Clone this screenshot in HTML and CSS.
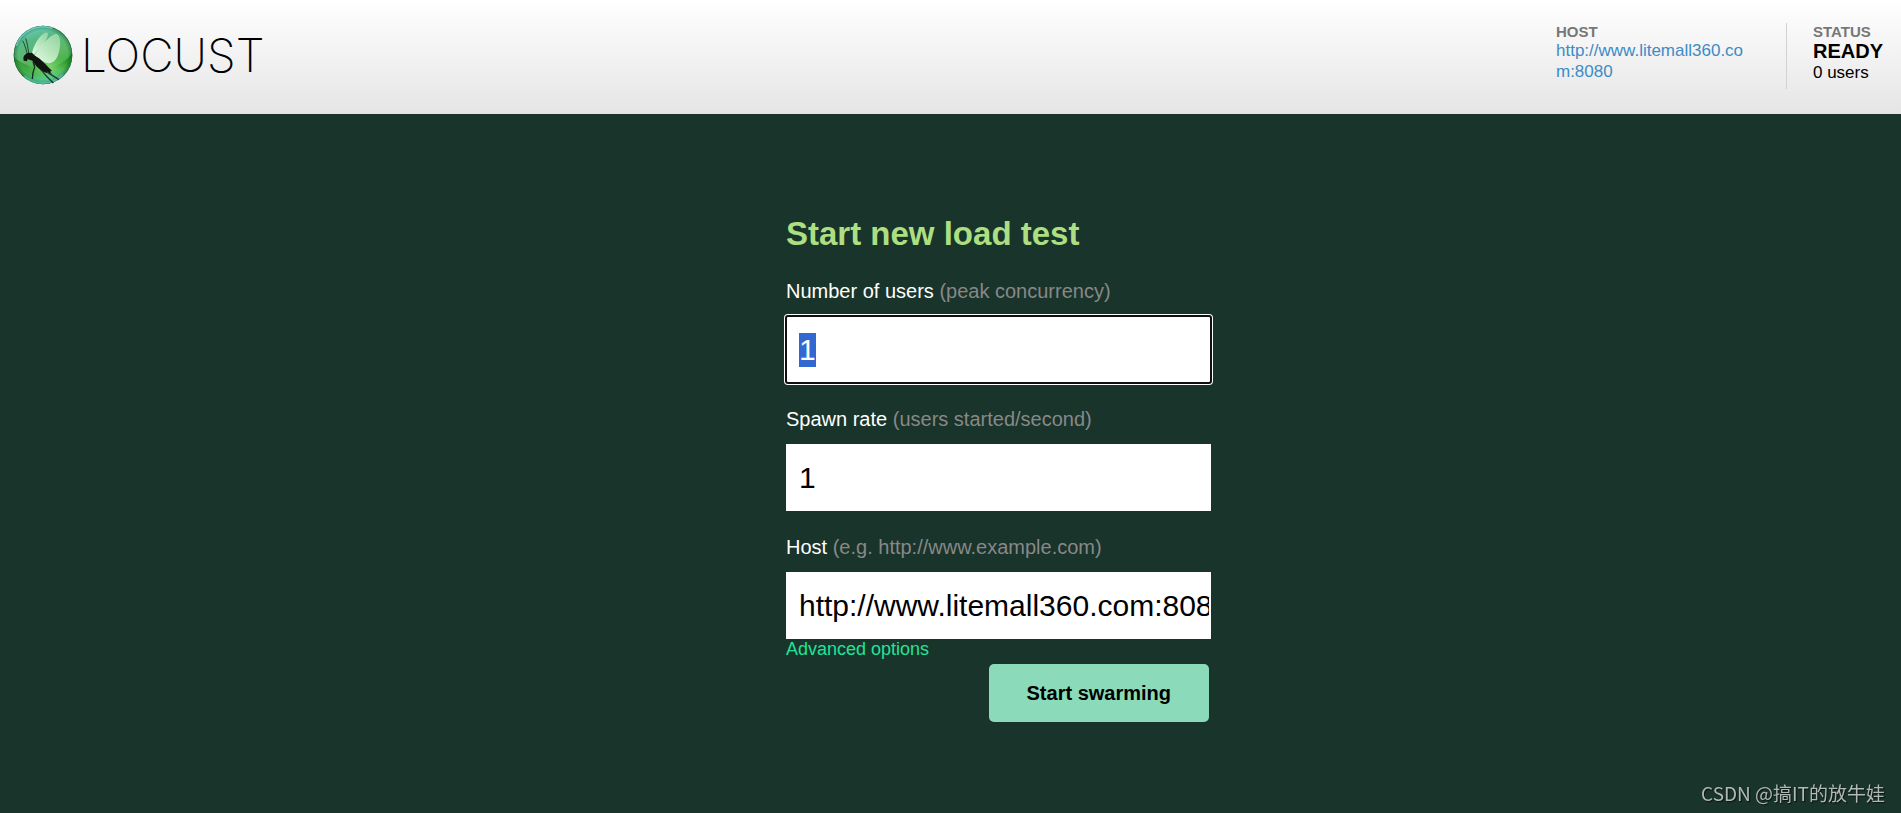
FILE: index.html
```html
<!DOCTYPE html>
<html lang="en">
<head>
<meta charset="utf-8">
<title>Locust</title>
<link rel="stylesheet" href="styles.css">
</head>
<body>
<header class="top">
  <div class="logo">
    <svg class="logo-mark" viewBox="0 0 180 180" aria-hidden="true">
      <defs>
        <linearGradient id="ball" x1="0.2" y1="0" x2="0.5" y2="1">
          <stop offset="0" stop-color="#6fcfc8"/>
          <stop offset="0.25" stop-color="#58b989"/>
          <stop offset="0.55" stop-color="#5cb866"/>
          <stop offset="0.8" stop-color="#3fae3c"/>
          <stop offset="1" stop-color="#52c0a4"/>
        </linearGradient>
        <radialGradient id="rim" cx="0.5" cy="0.5" r="0.5">
          <stop offset="0.84" stop-color="#0b4a1c" stop-opacity="0"/>
          <stop offset="0.96" stop-color="#0b5a26" stop-opacity="0.35"/>
          <stop offset="1" stop-color="#063c22" stop-opacity="0.85"/>
        </radialGradient>
        <linearGradient id="shade" x1="0" y1="0" x2="0" y2="1">
          <stop offset="0" stop-color="#08700f" stop-opacity="0.85"/>
          <stop offset="0.55" stop-color="#2d9a2d" stop-opacity="0.4"/>
          <stop offset="1" stop-color="#5fd9c2" stop-opacity="0.5"/>
        </linearGradient>
        <radialGradient id="glow" cx="0.5" cy="0.5" r="0.5">
          <stop offset="0" stop-color="#a5f08e" stop-opacity="0.7"/>
          <stop offset="1" stop-color="#7ed968" stop-opacity="0"/>
        </radialGradient>
        <linearGradient id="wing" x1="1" y1="0" x2="0.2" y2="1">
          <stop offset="0" stop-color="#a4dca8" stop-opacity="0.75"/>
          <stop offset="1" stop-color="#e2fbe4" stop-opacity="0.95"/>
        </linearGradient>
      </defs>
      <circle cx="90" cy="90" r="88" fill="url(#ball)"/>
      <path d="M2 96C30 120 60 130 92 128C130 126 160 112 177 84A88 88 0 0 1 2 96Z" fill="url(#shade)"/>
      <ellipse cx="105" cy="130" rx="66" ry="42" fill="url(#glow)"/>
      <circle cx="90" cy="90" r="88" fill="url(#rim)"/>
      <path d="M10 62A84 84 0 0 1 118 10" fill="none" stroke="#86e0e2" stroke-width="5" opacity="0.6"/>
      <path d="M34 153A84 84 0 0 0 150 149" fill="none" stroke="#6bd5c8" stroke-width="6" opacity="0.5"/>
      <path d="M57 84C62 62 80 28 100 22C110 23 103 42 91 58C81 71 70 81 62 90Z" fill="url(#wing)"/>
      <path d="M64 91C80 67 107 32 129 26C146 30 144 68 134 93C125 113 110 119 95 112C82 106 72 100 64 91Z" fill="url(#wing)"/>
      <path d="M29 47C35 58 38 69 42 84M38 40C43 55 45 68 47 84" fill="none" stroke="#14351e" stroke-width="2.5"/>
      <path d="M33 92L42 84L57 83L64 91L80 101L96 116L112 133L117 137L111 140L117 147L108 144L101 144L87 139L70 124L58 107L50 104L43 103L42 109L32 107L31 98Z" fill="#11150f"/>
      <path d="M60 110L65 127L60 143L58 162M65 127L63 117M84 134C96 150 108 162 121 174M100 140C113 148 126 157 138 164" fill="none" stroke="#122c25" stroke-width="4" stroke-linejoin="round"/>
      <path d="M86 137C98 150 109 162 122 172M102 141L138 163" fill="none" stroke="#41658a" stroke-width="1.5"/>
    </svg>
    <span class="logo-name">LOCUST</span>
  </div>
  <div class="stats">
    <div class="stat stat-host">
      <div class="stat-label">HOST</div>
      <a class="stat-link" href="http://www.litemall360.com:8080">http://www.litemall360.com:8080</a>
    </div>
    <div class="stat stat-status">
      <div class="stat-label">STATUS</div>
      <div class="stat-state">READY</div>
      <div class="stat-users">0 users</div>
    </div>
  </div>
</header>
<main class="page">
  <form class="start">
    <h1 class="start-title">Start new load test</h1>
    <label class="field-label" for="users">Number of users <span class="hint">(peak concurrency)</span></label>
    <input class="field" id="users" type="text" value="1" autofocus>
    <label class="field-label" for="rate">Spawn rate <span class="hint">(users started/second)</span></label>
    <input class="field" id="rate" type="text" value="1">
    <label class="field-label" for="host">Host <span class="hint">(e.g. http://www.example.com)</span></label>
    <input class="field" id="host" type="text" value="http://www.litemall360.com:8080">
    <a class="advanced" href="#advanced">Advanced options</a>
    <button class="submit" type="submit">Start swarming</button>
  </form>
</main>
<div class="watermark">CSDN @搞IT的放牛娃</div>
<script src="script.js"></script>
</body>
</html>
```
FILE: styles.css
```css
* { box-sizing: border-box; }

body {
  margin: 0;
  min-height: 100vh;
  background: #19342a;
  color: #fff;
  font-family: "Liberation Sans", Arial, sans-serif;
}

.top {
  display: flex;
  justify-content: space-between;
  align-items: flex-start;
  min-height: 114px;
  padding: 23px 18px 0 13px;
  background: linear-gradient(#fff, #e5e5e5);
  color: #000;
}

.logo {
  display: flex;
  align-items: center;
  gap: 8px;
  padding-top: 2px;
}

.logo-mark {
  width: 60px;
  height: 60px;
}

.logo-name {
  font-family: Inter, sans-serif;
  font-weight: 200;
  font-size: 46px;
  line-height: 60px;
}

.stats { display: flex; }

.stat { min-height: 66px; }

.stat-host {
  width: 231px;
  padding-right: 36px;
  border-right: 1px solid #d2d2d2;
}

.stat-status { padding-left: 26px; }

.stat-label {
  color: #777;
  font-size: 15px;
  font-weight: bold;
  line-height: 17px;
}

.stat-link {
  display: block;
  color: #3d8bc6;
  font-size: 17px;
  line-height: 21px;
  text-decoration: none;
  word-break: break-all;
}

.stat-state {
  font-size: 20px;
  font-weight: bold;
  line-height: 22px;
}

.stat-users {
  font-size: 17px;
  line-height: 22px;
}

.page {
  display: flex;
  justify-content: center;
  padding: 101px 16px 40px;
}

.start {
  display: flex;
  flex-direction: column;
  width: 425px;
  max-width: 100%;
  margin-left: 96px;
}

.start-title {
  margin: 0 0 26px;
  color: #addf82;
  font-size: 33px;
  line-height: 38px;
}

.field-label {
  margin-bottom: 13px;
  font-size: 20px;
  line-height: 24px;
}

.hint { color: #888; }

.field {
  width: 100%;
  height: 67px;
  margin: 0 0 24px;
  padding: 0 2px 0 13px;
  border: 0;
  background: #fff;
  color: #000;
  font-family: inherit;
  font-size: 30px;
}

.field:focus {
  border-radius: 2px;
  outline: 2px solid #101010;
  outline-offset: -1px;
  box-shadow: 0 0 0 2px #fff;
}

.field::selection {
  background: #3367d1;
  color: #fff;
}

#host { margin-bottom: 0; }

.advanced {
  align-self: flex-start;
  color: #22e39a;
  font-size: 18px;
  line-height: 20px;
  text-decoration: none;
}

.submit {
  align-self: flex-end;
  height: 58px;
  margin: 5px 2px 0 0;
  padding: 0 38px;
  border: 0;
  border-radius: 5px;
  background: #8bdab9;
  color: #000;
  font-family: inherit;
  font-size: 20px;
  font-weight: bold;
}

.watermark {
  position: fixed;
  right: 16px;
  bottom: 6px;
  color: #b2b8b5;
  font-family: "Noto Sans CJK SC", sans-serif;
  font-size: 19px;
  line-height: 28px;
  text-shadow: 1px 1px 1px #0a1510;
}
```
FILE: script.js
```js
const users = document.getElementById("users");
users.focus();
users.select();
```
